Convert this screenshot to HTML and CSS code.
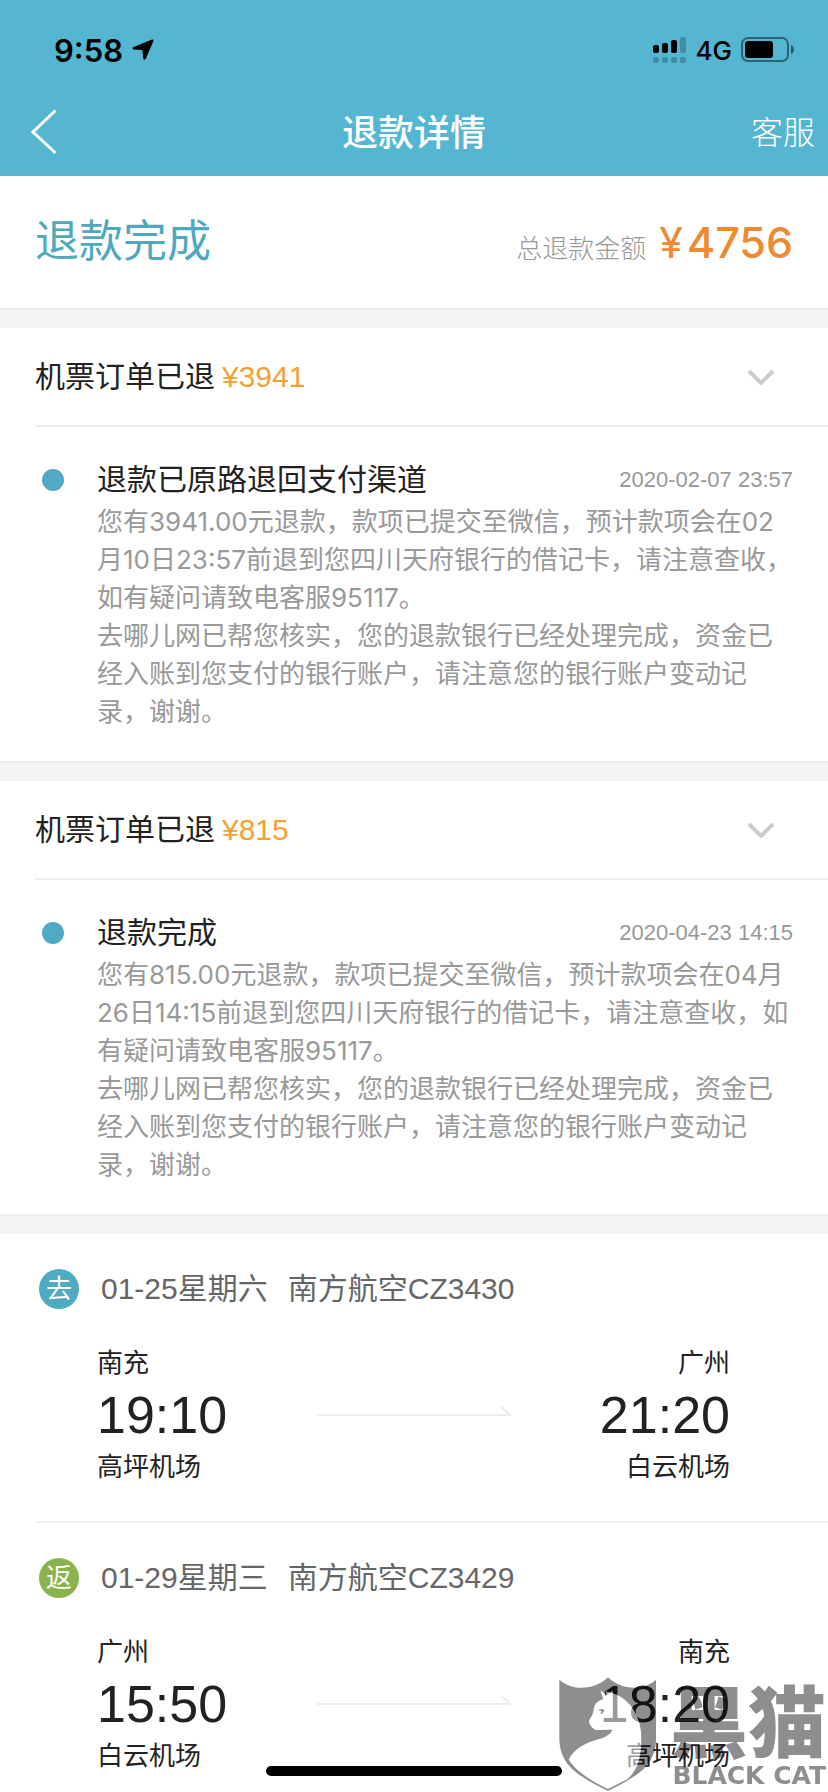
FILE: index.html
```html
<!DOCTYPE html>
<html lang="zh-CN">
<head>
  <meta charset="UTF-8">
  <meta name="viewport" content="width=device-width, initial-scale=1">
  <title>退款详情</title>
  <link rel="stylesheet" href="styles.css">
</head>
<body>

  <header class="top">
    <div class="status">
      <div class="status-left">
        <span class="clock">9:58</span>
        <svg width="22" height="22" viewBox="0 0 22 22"><path d="M20 .6 1.2 8.200Q-.4 9.400 1.400 10.400L10.300 10.900 11.300 19.800Q12.500 21.700 13.600 20L21.500 2Q21.800.2 20 .6Z"/></svg>
      </div>
      <div class="status-right">
        <svg width="34" height="27" viewBox="0 0 34 27">
          <rect x="0" y="8" width="6" height="8" rx="2"/>
          <rect x="9" y="6" width="6" height="10" rx="2"/>
          <rect x="18" y="3" width="6" height="13" rx="2"/>
          <g opacity=".22">
            <rect x="27" y="0" width="6" height="16" rx="2"/>
            <rect x="0" y="20" width="6" height="6" rx="2"/>
            <rect x="9" y="20" width="6" height="6" rx="2"/>
            <rect x="18" y="20" width="6" height="6" rx="2"/>
            <rect x="27" y="20" width="6" height="6" rx="2"/>
          </g>
        </svg>
        <span class="network">4G</span>
        <svg width="54" height="26" viewBox="0 0 54 26">
          <rect x="1" y="1" width="46" height="23" rx="6" fill="none" stroke="#000" stroke-opacity=".45" stroke-width="2"/>
          <rect x="4" y="4" width="28" height="17" rx="3"/>
          <path d="M50 8Q53 9 53 12.500T50 17Z" opacity=".5"/>
        </svg>
      </div>
    </div>
    <nav class="nav">
      <button class="back" aria-label="返回">
        <svg width="26" height="46" viewBox="0 0 26 46"><path d="M24.500 1.500 2 23 24.500 44" fill="none" stroke="#fff" stroke-width="3"/></svg>
      </button>
      <h1>退款详情</h1>
      <button class="service">客服</button>
    </nav>
  </header>

  <main>
    <section class="card total">
      <h2>退款完成</h2>
      <p><span class="total-label">总退款金额</span><strong><span class="yen">¥</span>4756</strong></p>
    </section>

    <details class="card refund" open>
      <summary>
        <span>机票订单已退</span>
        <span class="price">¥3941</span>
        <svg class="chevron" width="28" height="16" viewBox="0 0 28 16"><path d="M2 2 14 14 26 2" fill="none" stroke="#ccc" stroke-width="4"/></svg>
      </summary>
      <div class="step">
        <span class="dot"></span>
        <h3>退款已原路退回支付渠道</h3>
        <time>2020-02-07 23:57</time>
        <div class="desc">
          <p>您有3941.00元退款，款项已提交至微信，预计款项会在02月10日23:57前退到您四川天府银行的借记卡，请注意查收，如有疑问请致电客服95117。</p>
          <p>去哪儿网已帮您核实，您的退款银行已经处理完成，资金已经入账到您支付的银行账户，请注意您的银行账户变动记录，谢谢。</p>
        </div>
      </div>
    </details>

    <details class="card refund" open>
      <summary>
        <span>机票订单已退</span>
        <span class="price">¥815</span>
        <svg class="chevron" width="28" height="16" viewBox="0 0 28 16"><path d="M2 2 14 14 26 2" fill="none" stroke="#ccc" stroke-width="4"/></svg>
      </summary>
      <div class="step">
        <span class="dot"></span>
        <h3>退款完成</h3>
        <time>2020-04-23 14:15</time>
        <div class="desc">
          <p>您有815.00元退款，款项已提交至微信，预计款项会在04月26日14:15前退到您四川天府银行的借记卡，请注意查收，如有疑问请致电客服95117。</p>
          <p>去哪儿网已帮您核实，您的退款银行已经处理完成，资金已经入账到您支付的银行账户，请注意您的银行账户变动记录，谢谢。</p>
        </div>
      </div>
    </details>

    <section class="flights">
      <article class="flight">
        <div class="flight-head">
          <span class="badge go">去</span>
          <span>01-25星期六</span>
          <span>南方航空CZ3430</span>
        </div>
        <div class="route">
          <div class="stop">
            <span>南充</span>
            <time>19:10</time>
            <span>高坪机场</span>
          </div>
          <svg class="arrow" width="194" height="20" viewBox="0 0 194 20"><path d="M0 10H194M184 2 193 9.500" fill="none" stroke="#ececec" stroke-width="2"/></svg>
          <div class="stop arrive">
            <span>广州</span>
            <time>21:20</time>
            <span>白云机场</span>
          </div>
        </div>
      </article>

      <article class="flight">
        <div class="flight-head">
          <span class="badge return">返</span>
          <span>01-29星期三</span>
          <span>南方航空CZ3429</span>
        </div>
        <div class="route">
          <div class="stop">
            <span>广州</span>
            <time>15:50</time>
            <span>白云机场</span>
          </div>
          <svg class="arrow" width="194" height="20" viewBox="0 0 194 20"><path d="M0 10H194M184 2 193 9.500" fill="none" stroke="#ececec" stroke-width="2"/></svg>
          <div class="stop arrive">
            <span>南充</span>
            <time>18:20</time>
            <span>高坪机场</span>
          </div>
        </div>
      </article>
    </section>
  </main>

  <div class="home-bar"></div>

  <!-- cat silhouette fades the text below it, the grey parts multiply over it -->
  <svg class="cat" width="98" height="115" viewBox="57 51 294 345">
    <path d="M181 91 200 106 196 94 205 96C255 105 296 150 303 215C307 280 297 325 263 357L204 387C150 360 110 335 86 299C100 270 130 250 175 238C200 231 214 220 217 209L166 210C150 200 144 185 149 178C160 165 160 150 164 136C170 125 180 120 190 117Z"/>
  </svg>
  <div class="watermark">
    <svg class="shield" width="98" height="115" viewBox="57 51 294 345">
      <path fill-rule="evenodd" d="M58 59C100 95 165 90 204 52C243 90 308 95 348 59V240C345 315 300 345 204 393C108 345 62 315 58 240ZM181 91 190 117C180 120 170 125 164 136C160 150 160 165 149 178C144 185 150 200 166 210L217 209C214 220 200 231 175 238C130 250 100 270 86 299C110 335 150 360 204 387L263 357C297 325 307 280 303 215C296 150 255 105 205 96L196 94 200 106Z"/>
      <path d="M175 151Q183 143 193 150Q191 160 180 162L186 153Z"/>
    </svg>
    <div class="wordmark">
      <span class="wordmark-cn">黑猫</span>
      <span class="wordmark-en">BLACK CAT</span>
    </div>
  </div>

</body>
</html>
```

FILE: styles.css
```css
* {
  box-sizing: border-box;
}
html {
  scrollbar-width: none;
}
body {
  margin: 0;
  background: #fff;
  color: #222;
  font-family: "Liberation Sans", "Noto Sans CJK SC", sans-serif;
  font-size: 30px;
  overflow-x: hidden;
}
h1, h2, h3, p {
  margin: 0;
  font-weight: 400;
}
button {
  border: 0;
  padding: 0;
  background: none;
  color: inherit;
  font: inherit;
}
svg {
  display: block;
  flex: none;
}

/* header */
.top {
  background: #54b6d0;
}
.status {
  display: flex;
  justify-content: space-between;
  align-items: center;
  height: 88px;
  padding: 12px 33px 0 54px;
  color: #000;
  font-family: Inter, sans-serif;
}
.status-left, .status-right {
  display: flex;
  align-items: center;
  gap: 9px;
}
.clock {
  font-size: 31px;
  font-weight: 600;
}
.network {
  font-size: 26px;
  font-weight: 500;
}
.nav {
  display: grid;
  grid-template-columns: 1fr auto 1fr;
  align-items: center;
  height: 88px;
  padding: 0 13px 0 31px;
  color: #fff;
  font-family: "Noto Sans CJK SC", sans-serif;
}
.back {
  justify-self: start;
}
.nav h1 {
  margin-right: 18px;
  padding-bottom: 4px;
  font-size: 36px;
  font-weight: 500;
  line-height: 44px;
}
.service {
  justify-self: end;
  padding-bottom: 4px;
  font-size: 32px;
  font-weight: 300;
  line-height: 44px;
}

/* cards */
.card {
  border-bottom: 18px solid #f4f4f4;
  box-shadow: inset 0 -2px #ececec;
}
.total {
  display: flex;
  justify-content: space-between;
  align-items: center;
  height: 152px;
  padding: 0 35px 2px;
}
.total h2 {
  color: #4fa8bb;
  font-size: 44px;
  line-height: 60px;
}
.total p {
  display: flex;
  align-items: baseline;
  gap: 13px;
}
.total-label {
  color: #999;
  font-size: 26px;
  font-weight: 300;
}
.total strong {
  color: #ee8a30;
  font-family: Inter, "Noto Sans CJK SC", sans-serif;
  font-size: 43px;
  font-weight: 500;
}
.yen {
  margin-right: 4px;
  font-weight: 400;
}
.refund summary {
  display: flex;
  align-items: center;
  height: 99px;
  margin-left: 35px;
  padding-right: 53px;
  border-bottom: 2px solid #ececec;
  line-height: 40px;
  list-style: none;
  cursor: pointer;
}
.price {
  margin-left: 7px;
  color: #f5a033;
}
.chevron {
  margin-left: auto;
}
.step {
  display: grid;
  grid-template-columns: 62px 1fr auto;
  align-items: center;
  padding: 33px 35px 32px 35px;
}
.dot {
  width: 22px;
  height: 22px;
  margin-left: 7px;
  border-radius: 50%;
  background: #4fabc3;
}
.step h3 {
  font-size: 30px;
  line-height: 40px;
}
.step time {
  color: #999;
  font-size: 22px;
}
.desc {
  grid-column: 2 / 4;
  margin-top: 3px;
  color: #999;
  font-family: Inter, "Noto Sans CJK SC", sans-serif;
  font-size: 26px;
  font-weight: 300;
  line-height: 38px;
}

/* flights */
.flight {
  margin-left: 35px;
  padding: 35px 0 36px;
  border-bottom: 2px solid #f0f0f0;
}
.flight-head {
  display: flex;
  align-items: center;
  gap: 20px;
  color: #666;
  line-height: 40px;
}
.badge {
  width: 40px;
  height: 40px;
  margin: 0 2px 0 4px;
  border-radius: 50%;
  color: #fff;
  font-size: 26px;
  line-height: 40px;
  text-align: center;
}
.go {
  background: #4fabc3;
}
.return {
  background: #8ab34e;
}
.route {
  display: flex;
  justify-content: space-between;
  align-items: center;
  margin-top: 36px;
  padding: 0 98px 0 62px;
}
.stop {
  display: flex;
  flex-direction: column;
  flex: 1;
  font-size: 26px;
  line-height: 36px;
}
.stop time {
  font-size: 52px;
  line-height: 68px;
}
.arrive {
  text-align: right;
}

/* overlays */
.home-bar {
  position: fixed;
  bottom: 16px;
  left: 50%;
  width: 296px;
  height: 10px;
  margin-left: -148px;
  border-radius: 5px;
  background: #000;
}
.cat {
  position: fixed;
  right: 171px;
  bottom: 0;
  fill: #fff;
  opacity: .55;
}
.watermark {
  position: fixed;
  right: 0;
  bottom: 0;
  display: flex;
  align-items: flex-end;
  justify-content: space-between;
  width: 269px;
  padding-right: 2px;
  color: #8f8d8e;
  mix-blend-mode: multiply;
  pointer-events: none;
}
.shield {
  fill: #8f8d8e;
}
.wordmark {
  display: flex;
  flex-direction: column;
  align-items: flex-end;
  gap: 6px;
  padding-bottom: 2px;
}
.wordmark-cn {
  font-family: "Noto Sans CJK SC", sans-serif;
  font-size: 78px;
  font-weight: 900;
  line-height: 76px;
}
.wordmark-en {
  font-family: "DejaVu Sans", sans-serif;
  font-size: 25px;
  font-weight: 700;
  line-height: 28px;
  white-space: nowrap;
}
```
